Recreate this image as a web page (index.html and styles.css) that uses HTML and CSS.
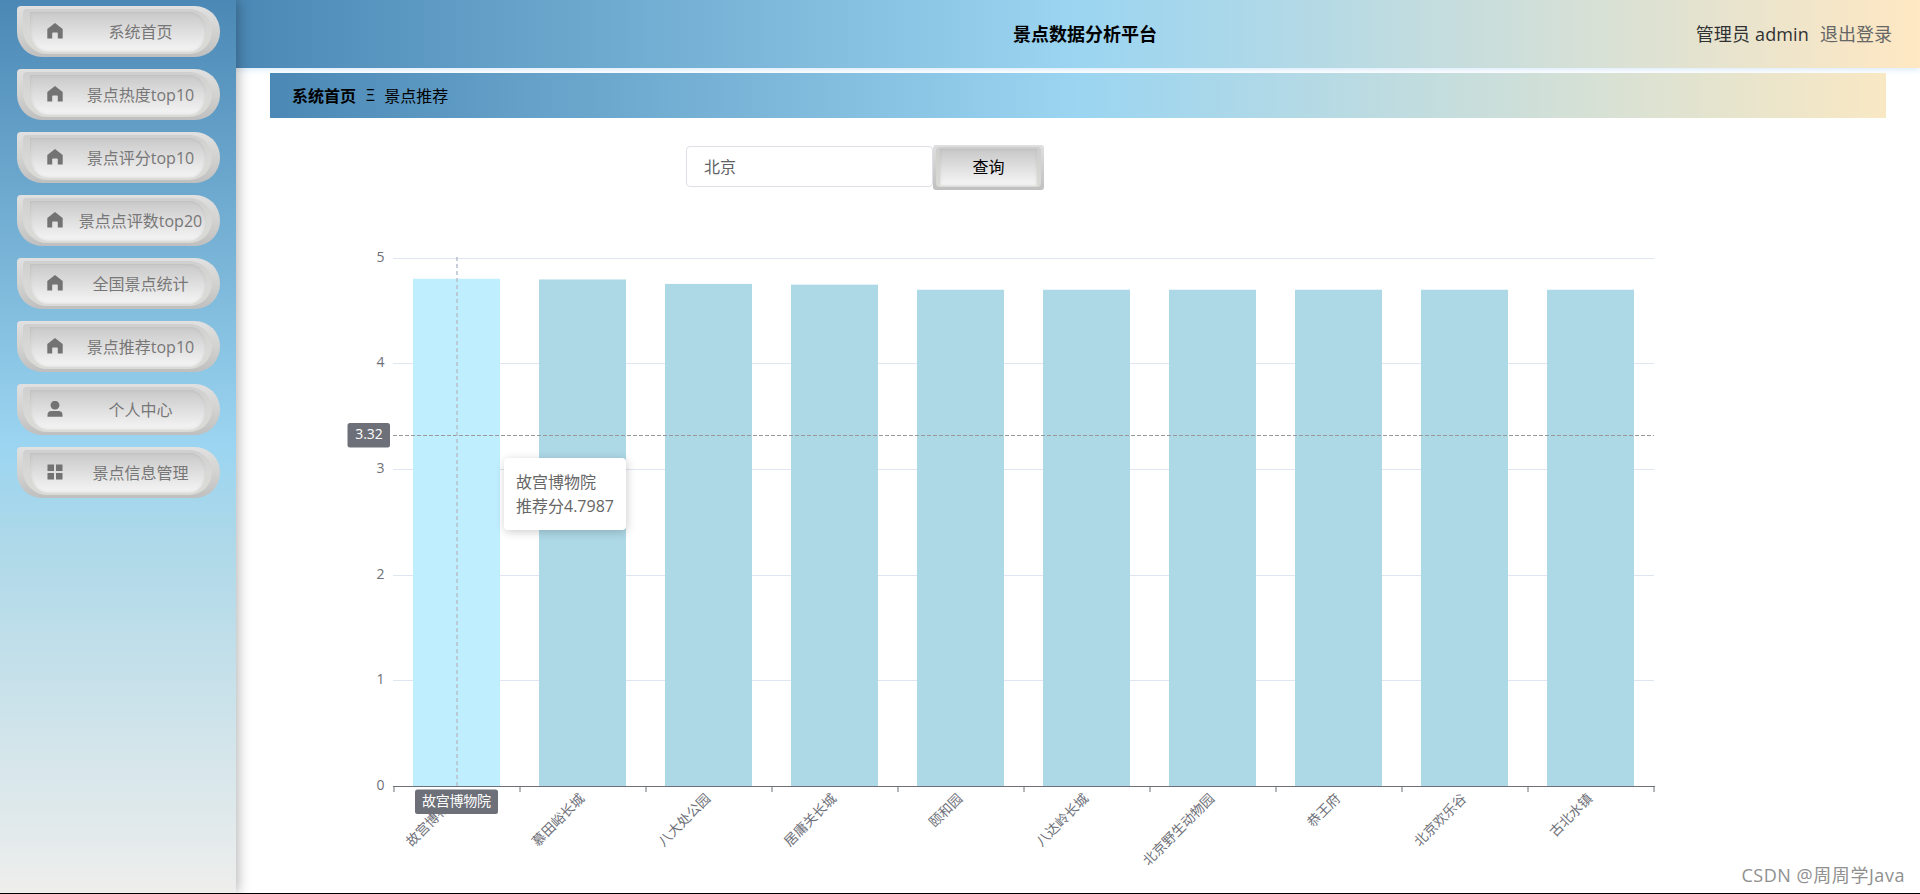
FILE: index.html
```
<!DOCTYPE html>
<html lang="zh-CN">
<head>
<meta charset="utf-8">
<title>景点数据分析平台</title>
<link rel="stylesheet" href="styles.css">
</head>
<body>
<svg width="0" height="0" class="defs">
  <symbol id="house" viewBox="0 0 16 16"><path d="M8 0 15.7 6V15.4H10.8V10.2Q10.8 9.4 10 9.4H6Q5.2 9.4 5.2 10.2V15.4H.3V6Z"/></symbol>
  <symbol id="user" viewBox="0 0 16 16"><circle cx="8" cy="4.2" r="4.4"/><path d="M.5 15.8V14Q.5 10 4.5 10H11.5Q15.500 10 15.500 14V15.800Z"/></symbol>
  <symbol id="grid" viewBox="0 0 16 16"><path d="M.5.5H7V7H.5ZM9 .5h6.500V7H9ZM.5 9H7v6.500H.5ZM9 9h6.500v6.500H9Z"/></symbol>
</svg>
<div class="app">
  <nav class="sidebar">
    <a class="item"><span class="face"><svg class="icon"><use href="#house"/></svg><span class="label">系统首页</span></span></a>
    <a class="item"><span class="face"><svg class="icon"><use href="#house"/></svg><span class="label">景点热度top10</span></span></a>
    <a class="item"><span class="face"><svg class="icon"><use href="#house"/></svg><span class="label">景点评分top10</span></span></a>
    <a class="item"><span class="face"><svg class="icon"><use href="#house"/></svg><span class="label">景点点评数top20</span></span></a>
    <a class="item"><span class="face"><svg class="icon"><use href="#house"/></svg><span class="label">全国景点统计</span></span></a>
    <a class="item"><span class="face"><svg class="icon"><use href="#house"/></svg><span class="label">景点推荐top10</span></span></a>
    <a class="item"><span class="face"><svg class="icon"><use href="#user"/></svg><span class="label">个人中心</span></span></a>
    <a class="item"><span class="face"><svg class="icon"><use href="#grid"/></svg><span class="label">景点信息管理</span></span></a>
  </nav>
  <div class="main">
    <header class="header">
      <h1 class="title">景点数据分析平台</h1>
      <div class="account"><span class="user">管理员 admin</span><a class="logout">退出登录</a></div>
    </header>
    <div class="crumbs"><b>系统首页</b><span class="sep">Ξ</span><span>景点推荐</span></div>
    <div class="search">
      <div class="input">北京</div>
      <button class="query"><span class="query-face">查询</span></button>
    </div>
    <svg class="chart" id="chart" width="1320" height="660" viewBox="340 230 1320 660"></svg>
  </div>
</div>
<div class="tooltip">故宫博物院<br>推荐分4.7987</div>
<div class="watermark">CSDN @周周学Java</div>
<script src="chart.js"></script>
</body>
</html>
```
FILE: styles.css
```
* { box-sizing: border-box; }
body {
  margin: 0;
  font-family: "Open Sans", "Noto Sans CJK SC", sans-serif;
  font-size: 16px;
  background: #fff;
  position: relative;
  height: 894px;
  overflow: hidden;
}
.defs { position: absolute; }
.app { display: flex; height: 894px; border-bottom: 1px solid #000; }
.sidebar {
  width: 236px;
  flex: none;
  padding: 6px 16px 0 17px;
  display: flex;
  flex-direction: column;
  gap: 12px;
  background: linear-gradient(180deg, #4b88b5 0%, #9bd5f1 50%, #acd8e9 60%, #eeeeec 100%);
  box-shadow: 2px 0 12px rgba(0, 0, 0, .3);
  z-index: 2;
}
.item {
  display: flex;
  height: 51px;
  padding: 3px 8px 3px 6px;
  border-radius: 4px 25px 25px 25px;
  background: linear-gradient(180deg, #e1e1e1, #d2d2d1 50%, #bfbfbf);
}
.face {
  flex: 1;
  display: flex;
  align-items: center;
  padding: 0 3px 0 17px;
  border: solid transparent;
  border-width: 3px 6px 2px 7px;
  border-radius: 4px 23px 23px 25px;
  color: #777;
  background:
    linear-gradient(180deg, #cac9c9, #dedddd 45%, #f1f1f1 90%) padding-box,
    linear-gradient(180deg, #cfcfcf, #d8d8d6 50%, #dadad6) border-box;
  box-shadow: inset 0 0 3px rgba(150, 150, 150, .3);
}
.icon { width: 16px; height: 16px; flex: none; fill: #737373; margin-top: -3px; }
.label { flex: 1; margin: 0 0 0 15px; white-space: nowrap; line-height: 24px; display: flex; justify-content: center; }
.main { flex: 1; min-width: 0; }
.header {
  height: 68px;
  display: grid;
  grid-template-columns: 1fr auto 1fr;
  align-items: center;
  padding: 0 28px 2px 42px;
  font-size: 18px;
  background: linear-gradient(90deg, #4b88b5 0%, #9bd5f1 50%, #acd8e9 60%, #ffe8c3 100%);
  box-shadow: 0 2px 6px #dcebfa;
}
.title { grid-column: 2; margin: 0; font-size: 18px; }
.account { display: flex; justify-content: flex-end; gap: 11px; color: #303133; margin-top: -1px; }
.user { letter-spacing: .15px; }
.logout { color: #666; }
.crumbs {
  height: 45px;
  margin: 5px 34px 0;
  padding: 0 22px 1px;
  display: flex;
  align-items: center;
  background: linear-gradient(90deg, #4b88b5 0%, #9bd5f1 50%, #acd8e9 60%, #f9e8c4 100%);
}
.sep { margin: 0 9.500px 0 10px; }
.search { display: flex; height: 45px; margin: 27px 0 0 450px; }
.input {
  width: 247px;
  height: 41px;
  margin-top: 1px;
  line-height: 41px;
  padding-left: 17px;
  border: 1px solid #dcdfe6;
  border-radius: 4px;
  color: #606266;
}
.query {
  width: 111px;
  height: 45px;
  padding: 2px 3px 3px;
  border: 0;
  border-radius: 3px;
  display: flex;
  background: linear-gradient(180deg, #dfdfdf, #c0c0c0);
}
.query-face {
  flex: 1;
  height: 40px;
  font: 16px/36px "Open Sans", "Noto Sans CJK SC", sans-serif;
  color: #000;
  border: solid transparent;
  border-width: 2px 4px 1px;
  border-radius: 4px;
  background:
    linear-gradient(180deg, #c9c8c8, #dedddd 45%, #f2f2f2 90%) padding-box,
    linear-gradient(180deg, #cdcdcd, #dadad6) border-box;
  box-shadow: inset 0 0 3px rgba(150, 150, 150, .3);
}
.chart { display: block; margin: 40px 0 0 104px; }
.grid-line { stroke: #e0e6f1; }
.axis-line { stroke: #6e7079; }
.axis-text { fill: #6e7079; font-size: 14px; text-anchor: end; }
.category { fill: #6e7079; font-size: 13.5px; text-anchor: end; }
.bar { fill: #add8e6; }
.bar-active { fill: #bfeeff; }
.pointer-y { stroke: #999; stroke-dasharray: 4 2; }
.pointer-x { stroke: #b8c0cc; stroke-width: 1.5; stroke-dasharray: 4 3; }
.tag { fill: #6e7079; }
.tag-text { fill: #fff; font-size: 14px; text-anchor: middle; }
.tooltip {
  position: absolute;
  left: 504px;
  top: 458px;
  width: 122px;
  height: 72px;
  padding: 12px;
  border-radius: 4px;
  background: #fff;
  color: #666;
  line-height: 24px;
  box-shadow: 1px 2px 10px rgba(0, 0, 0, .2);
  white-space: nowrap;
  z-index: 3;
}
.watermark {
  position: absolute;
  right: 15px;
  top: 862px;
  font-size: 18px;
  letter-spacing: .55px;
  line-height: 26px;
  color: #8f8f8f;
  z-index: 3;
}
```
FILE: chart.js
```
const spots = [
  ['故宫博物院', 4.7987], ['慕田峪长城', 4.792], ['八大处公园', 4.75], ['居庸关长城', 4.743],
  ['颐和园', 4.695], ['八达岭长城', 4.695], ['北京野生动物园', 4.695], ['恭王府', 4.695],
  ['北京欢乐谷', 4.695], ['古北水镇', 4.695]
];
const left = 393, right = 1654, base = 786, unit = 105.7, step = 126;
let out = '';
for (let v = 0; v <= 5; v++) {
  const y = Math.round(base - v * unit) + 0.5;
  if (v) out += `<line class="grid-line" x1="${left}" x2="${right}" y1="${y}" y2="${y}"/>`;
  out += `<text class="axis-text" x="384.500" y="${y + 3}">${v}</text>`;
}
spots.forEach(([name, score], i) => {
  const x = left + i * step + 20, h = score * unit, cx = left + (i + 0.5) * step;
  out += `<rect class="${i ? 'bar' : 'bar-active'}" x="${x}" y="${base - h}" width="87" height="${h}"/>`;
  out += `<text class="category" transform="translate(${cx + 2} 798) rotate(-45)" x="0" y="2">${name}</text>`;
});
out += `<line class="axis-line" x1="${left}" x2="${right + 1}" y1="786.5" y2="786.5"/>`;
for (let i = 0; i <= spots.length; i++) {
  const x = left + i * step + 1;
  out += `<line class="axis-line" x1="${x}" x2="${x}" y1="786" y2="792"/>`;
}
out += `<line class="pointer-y" x1="${left}" x2="${right}" y1="435.5" y2="435.5"/>
<line class="pointer-x" x1="457" x2="457" y1="257" y2="786"/>
<rect class="tag" x="347.500" y="423" width="42.500" height="24.500" rx="2.500"/>
<text class="tag-text" x="369" y="438.500">3.32</text>
<rect class="tag" x="415" y="789.500" width="83" height="24.500" rx="2.500"/>
<text class="tag-text" x="456.500" y="806" textLength="69">故宫博物院</text>`;
document.getElementById('chart').innerHTML = out;
```
